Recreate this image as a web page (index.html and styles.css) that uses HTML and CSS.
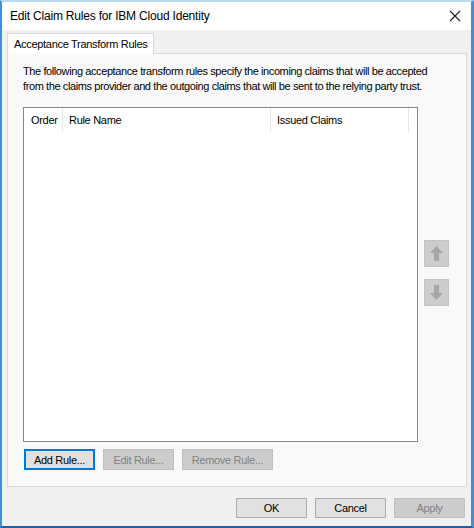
FILE: index.html
```html
<!DOCTYPE html>
<html>
<head>
<meta charset="utf-8">
<link rel="stylesheet" href="styles.css">
</head>
<body>
<div class="window">
  <div class="titlebar">
    <span class="title">Edit Claim Rules for IBM Cloud Identity</span>
    <svg class="close" width="12" height="12" viewBox="0 0 12 12"><path d="M1 1 L11 11 M11 1 L1 11" stroke="#1a1a1a" stroke-width="1.1" fill="none"/></svg>
  </div>
  <div class="client">
    <div class="tabs"><div class="tab">Acceptance Transform Rules</div></div>
    <div class="panel">
      <p class="desc">The following acceptance transform rules specify the incoming claims that will be accepted from the claims provider and the outgoing claims that will be sent to the relying party trust.</p>
      <div class="listrow">
        <div class="list">
          <div class="header">
            <div class="col c-order">Order</div>
            <div class="col c-name">Rule Name</div>
            <div class="col c-claims">Issued Claims</div>
            <div class="col c-rest"></div>
          </div>
        </div>
        <div class="side">
          <div class="arrow">
            <svg width="15" height="17" viewBox="0 0 15 17"><path d="M7.5 1 L14 8 L10 8 L10 16 L5 16 L5 8 L1 8 Z" fill="#a6a6a6"/></svg>
          </div>
          <div class="arrow">
            <svg width="15" height="17" viewBox="0 0 15 17"><path d="M7.5 16 L14 9 L10 9 L10 1 L5 1 L5 9 L1 9 Z" fill="#a6a6a6"/></svg>
          </div>
        </div>
      </div>
      <div class="rulebtns">
        <button class="btn focus">Add Rule...</button>
        <button class="btn disabled">Edit Rule...</button>
        <button class="btn disabled wide">Remove Rule...</button>
      </div>
    </div>
    <div class="footer">
      <button class="btn">OK</button>
      <button class="btn">Cancel</button>
      <button class="btn disabled">Apply</button>
    </div>
  </div>
</div>
</body>
</html>
```
FILE: styles.css
```css
html, body {
  margin: 0;
  padding: 0;
  background: #ffffff;
}
body {
  font-family: "Liberation Sans", Arial, sans-serif;
  font-size: 11px;
  letter-spacing: -0.3px;
  color: #000;
}
.window {
  width: 474px;
  height: 528px;
  box-sizing: border-box;
  border-top: 2px solid #b9dcf4;
  border-left: 2px solid #3f8fd9;
  border-right: 3px solid #3f8fd9;
  border-bottom: 2px solid #1e5fa8;
  display: flex;
  flex-direction: column;
}
.titlebar {
  height: 28px;
  flex: none;
  background: #ffffff;
  display: flex;
  align-items: center;
  justify-content: space-between;
  padding: 0 10px 0 8px;
}
.title {
  font-size: 12px;
  letter-spacing: -0.2px;
  color: #000;
}
.close {
  display: block;
}
.client {
  flex: 1;
  background: #f0f0f0;
  display: flex;
  flex-direction: column;
  padding: 3px 4px 0 5px;
}
.tabs {
  display: flex;
  height: 20px;
  position: relative;
  z-index: 1;
}
.tab {
  background: #ffffff;
  border: 1px solid #d9d9d9;
  border-bottom: none;
  padding: 0 6px 0 6px;
  line-height: 20px;
  height: 21px;
  box-sizing: border-box;
  white-space: nowrap;
}
.panel {
  height: 434px;
  box-sizing: border-box;
  border: 1px solid #d9d9d9;
  background: #f9f9f9;
  padding: 10px 0 0 15px;
  display: flex;
  flex-direction: column;
}
.desc {
  margin: 0;
  line-height: 15px;
  width: 418px;
  letter-spacing: -0.4px;
}
.listrow {
  display: flex;
  margin-top: 13px;
  gap: 6px;
}
.list {
  width: 395px;
  height: 335px;
  box-sizing: border-box;
  border: 1px solid #828790;
  background: #ffffff;
}
.header {
  display: flex;
  height: 24px;
  align-items: stretch;
}
.col {
  display: flex;
  align-items: center;
  box-sizing: border-box;
  padding-left: 7px;
  border-right: 1px solid #e5e5e5;
}
.c-order { width: 39px; }
.c-name { width: 208px; padding-left: 6px; }
.c-claims { width: 138px; padding-left: 6px; }
.c-rest { flex: 1; border-right: none; }
.side {
  display: flex;
  flex-direction: column;
  padding-top: 133px;
  gap: 12px;
}
.arrow {
  width: 25px;
  height: 27px;
  box-sizing: border-box;
  background: #cccccc;
  border: 1px solid #c4c4c4;
  display: flex;
  align-items: center;
  justify-content: center;
}
.rulebtns {
  display: flex;
  gap: 8px;
  margin-top: 7px;
  padding-left: 1px;
}
.btn {
  font-family: "Liberation Sans", Arial, sans-serif;
  font-size: 11px;
  letter-spacing: -0.3px;
  width: 71px;
  height: 21px;
  box-sizing: border-box;
  background: #e1e1e1;
  border: 1px solid #adadad;
  color: #000;
  padding: 0;
  margin: 0;
}
.btn.wide { width: 91px; }
.btn.focus {
  border: 2px solid #0078d7;
}
.btn.disabled {
  background: #cccccc;
  border-color: #bfbfbf;
  color: #838383;
}
.footer {
  display: flex;
  justify-content: flex-end;
  gap: 8px;
  margin-top: 11px;
  padding-right: 2px;
}
.footer .btn {
  height: 20px;
}
```
